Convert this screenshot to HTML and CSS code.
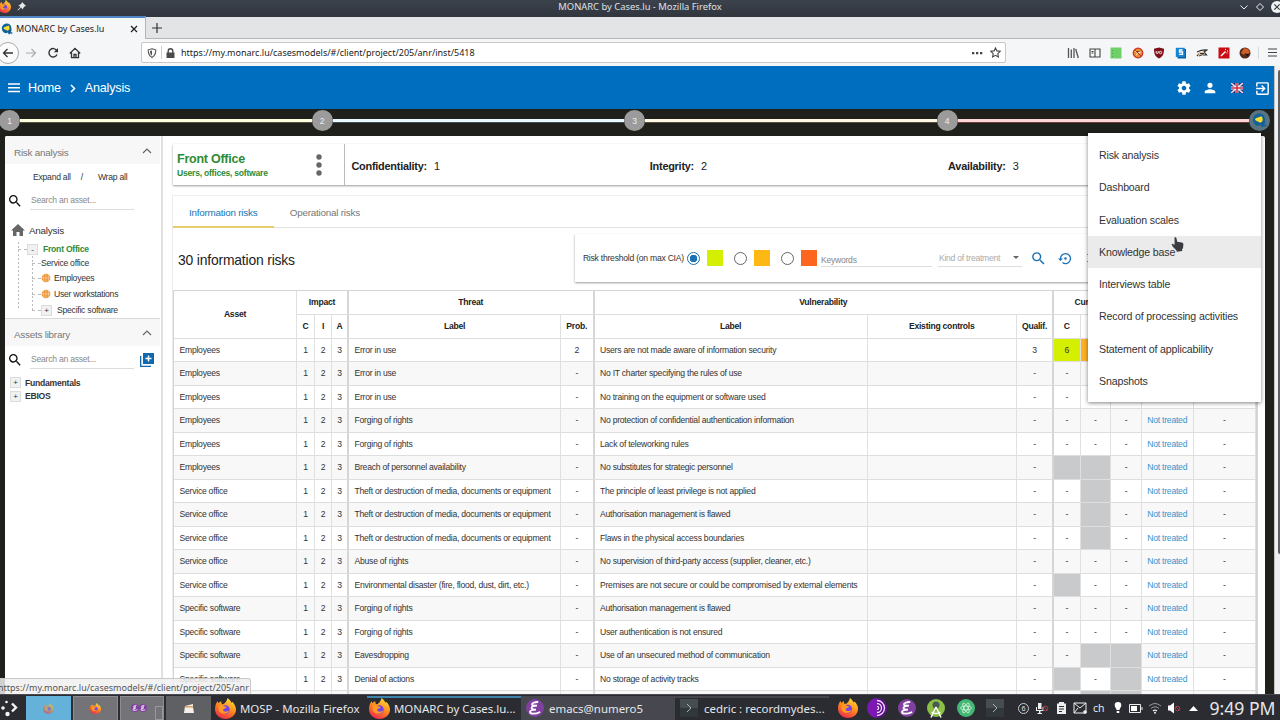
FILE: index.html
```html
<!DOCTYPE html>
<html lang="en">

<head>
    <meta charset="utf-8">
    <meta name="viewport" content="width=device-width, initial-scale=1.0">
    <title>MONARC by Cases.lu</title>
    <link rel="stylesheet" href="styles.css">
</head>

<body>

    <svg class="defs" width="0" height="0">
        <defs>
            <linearGradient id="flame" x1="0.8" y1="0" x2="0.3" y2="1">
                <stop offset="0" stop-color="#ffe23c" />
                <stop offset="0.5" stop-color="#ff8a1c" />
                <stop offset="1" stop-color="#f0294e" />
            </linearGradient>
        </defs>
        <symbol id="firefox" viewBox="0 0 20 20">
            <path fill="url(#flame)" d="M12 0c2 1.500 3 3 3.600 4.600l.9-1C19 6 20 8.700 20 11c0 5-4.500 9-10 9S0 16 0 10.500C0 7 1.300 4.500 2.600 2.800c0 1 .3 1.700.7 2.200C4 4 5 3.500 6 3.200c-.2 1 .2 2 .8 2.800C8.500 6 11 4 12 0z" />
            <circle cx="9.800" cy="11" r="4.200" fill="#7542e5" />
            <path fill="#ff9a22" d="M3.500 7.500c2-1.500 4-1 5.500.5 1.500 0 2 .5 2 1-1 1-3 1-3.500 2.500 1 2 4 2 6 .5-1 4-9 4.500-10-1z" />
        </symbol>
        <symbol id="emacs" viewBox="0 0 18 18">
            <circle cx="9" cy="9" r="9" fill="#81409f" />
            <path fill="none" stroke="#fff" stroke-width="1.800" stroke-linecap="round" d="M11.500 3C9 3 5.500 4.200 6 5.600c.4 1 3 1 5 1-3 .2-5.500 1-5.500 2.400 0 1.300 2 1.600 4.500 1.600-3 .2-6 1-6 2.400 0 2.200 6 2.200 9.500.2" />
        </symbol>
        <symbol id="terminal" viewBox="0 0 18 18">
            <path fill="#454d50" d="M0 0h18v18H0z" />
            <path fill="#30383b" d="M0 9h18v9H0z" />
            <path fill="none" stroke="#a5b5ae" stroke-width="1" d="M7 5l4 4-4 4" />
        </symbol>
        <symbol id="monarc" viewBox="0 0 14 14">
            <path fill="#14609a" d="M7 .5C3.500.5 1 3 1 6.500S3.500 12 6.500 12l1.500-1 1 2h1.500l.5-1 2 .8.5-1.300-2-1 .8-1.500C12.500 4 11 .5 7 .5z" />
            <path fill="#f6de2c" d="M8.800 3c1.300 1.200 1.500 3.500.7 5l-1.800 1L3.500 7c-.8-.5-.7-1.500 0-2z" />
        </symbol>
        <symbol id="search" viewBox="0 0 24 24">
            <path fill="currentColor" d="M15.500 14h-.79l-.28-.27A6.471 6.471 0 0 0 16 9.500 6.500 6.500 0 1 0 9.500 16c1.610 0 3.090-.59 4.230-1.570l.27.28v.79l5 4.990L20.490 19l-4.990-5zm-6 0C7.010 14 5 11.990 5 9.500S7.010 5 9.500 5 14 7.010 14 9.500 11.990 14 9.500 14z" />
        </symbol>
        <symbol id="chevron-up" viewBox="0 0 10 6">
            <path fill="none" stroke="#666" stroke-width="1.200" d="M1 5l4-4 4 4" />
        </symbol>
        <symbol id="globe" viewBox="0 0 10 10">
            <circle cx="5" cy="5" r="4.300" fill="#ee8f2c" />
            <path fill="none" stroke="#fbe0bd" stroke-width=".6" d="M1 5h8M5 1v8M3 1.500q-1.500 3.500 0 7M7 1.500q1.500 3.500 0 7" />
        </symbol>
        <symbol id="muted" viewBox="0 0 8 8">
            <circle cx="4" cy="4" r="2.700" fill="none" stroke="#b5434b" stroke-width="1" />
            <path stroke="#b5434b" d="M2 2l4 4" />
        </symbol>
    </svg>

    <header class="titlebar">
        <svg class="title-fox" width="13" height="13"><use href="#firefox" /></svg>
        <svg class="title-pin" width="9" height="9" viewBox="0 0 9 9"><path fill="#e8eaec" d="M5 0l4 4-1.200.3-1.600 1.600-.2 1.700-2-2L1 8.500.5 8l2.900-3-2-2 1.700-.2 1.600-1.600z" /></svg>
        <span class="title-text">MONARC by Cases.lu - Mozilla Firefox</span>
        <div class="title-buttons">
            <svg width="10" height="10" viewBox="0 0 10 10"><path fill="none" stroke="#eee" d="M1.500 3.500L5 7l3.500-3.500" /></svg>
            <svg width="10" height="10" viewBox="0 0 10 10"><path fill="none" stroke="#eee" d="M5 1.500L8.500 5 5 8.500 1.500 5z" /></svg>
            <svg width="12" height="12" viewBox="0 0 12 12"><circle cx="6" cy="6" r="6" fill="#f2f2f2" /><path stroke="#333a42" stroke-width="1.200" d="M3.300 3.300l5.400 5.400M8.700 3.300L3.300 8.700" /></svg>
        </div>
    </header>

    <div class="tabstrip">
        <div class="tab">
            <svg width="12" height="12"><use href="#monarc" /></svg>
            <span>MONARC by Cases.lu</span>
            <svg width="8" height="8" viewBox="0 0 8 8"><path stroke="#222" stroke-width="1.300" d="M1 1l6 6M7 1L1 7" /></svg>
        </div>
        <svg class="new-tab" width="10" height="10" viewBox="0 0 10 10"><path stroke="#333" stroke-width="1.200" d="M5 0v10M0 5h10" /></svg>
    </div>

    <div class="toolbar">
        <div class="nav-buttons">
            <span class="back"><svg width="12" height="10" viewBox="0 0 12 10"><path fill="none" stroke="#333" stroke-width="1.300" d="M11 5H1.500M5.500 1l-4 4 4 4" /></svg></span>
            <svg width="12" height="10" viewBox="0 0 12 10"><path fill="none" stroke="#aaa" stroke-width="1.100" d="M1 5h9.500M6.500 1l4 4-4 4" /></svg>
            <svg width="12" height="12" viewBox="0 0 12 12"><path fill="none" stroke="#333" stroke-width="1.400" d="M9.700 3.500A4.200 4.200 0 1 0 10 7.500" /><path fill="#333" d="M11 1v4.200H6.800z" /></svg>
            <svg width="12" height="12" viewBox="0 0 12 12"><path fill="none" stroke="#333" stroke-width="1.300" d="M.8 6.500L6 1.300l5.200 5.200M2.500 5.500v5.200h7V5.500M5 10.500v-3h2v3" /></svg>
        </div>
        <div class="urlbar">
            <svg width="10" height="10" viewBox="0 0 10 10"><path fill="none" stroke="#555" stroke-width="1.100" d="M5 .8l3.800 1C8.800 5.500 8 8 5 9.400 2 8 1.200 5.500 1.200 1.800z" /><path fill="#555" d="M5 2.500v5C3.500 6.500 3 5 3 3z" /></svg>
            <i class="url-sep"></i>
            <svg width="9" height="10" viewBox="0 0 9 10"><path fill="#4a4a4a" d="M.5 4.500h8V10h-8z" /><path fill="none" stroke="#4a4a4a" stroke-width="1.400" d="M2.200 5V3a2.300 2.300 0 0 1 4.600 0v2" /></svg>
            <span class="url">https://my.monarc.lu/casesmodels/#/client/project/205/anr/inst/5418</span>
            <svg class="dots" width="12" height="4" viewBox="0 0 12 4"><path fill="#444" d="M1 1h2.300v2.200H1zM5 1h2.300v2.200H5zM9 1h2.300v2.200H9z" /></svg>
            <svg width="11" height="11" viewBox="0 0 11 11"><path fill="none" stroke="#444" stroke-width="1.100" d="M5.500.9l1.400 3 3.300.4-2.400 2.300.6 3.300-2.900-1.600-2.900 1.600.6-3.300L.8 4.300l3.300-.4z" /></svg>
        </div>
        <div class="extensions">
            <svg width="12" height="12" viewBox="0 0 12 12"><path fill="none" stroke="#555" stroke-width="1.300" d="M1.500 1v10M4.300 2.500V11M7 1v10M8.700 2l2.600 9" /></svg>
            <svg width="12" height="12" viewBox="0 0 12 12"><path fill="none" stroke="#444" stroke-width="1.100" d="M1 2h10v8H1zM6 2v8" /><path stroke="#444" d="M2.500 4.500h2M2.500 6h2" /></svg>
            <svg width="12" height="12" viewBox="0 0 12 12"><path fill="#6fd06a" d="M.5.500h11v11H.5z" /><path fill="#48aa48" d="M2 3h1v1H2zM2 6h1v1H2zM2 9h1v1H2z" /></svg>
            <svg width="12" height="12" viewBox="0 0 12 12"><circle cx="6" cy="6" r="4.800" fill="#e98a35" stroke="#c53420" stroke-width="1.200" /><path stroke="#fff0d0" d="M3 4l3 2 3-1M4 8l4-3" /><path stroke="#c53420" d="M2.500 2.500l7 7" /></svg>
            <svg width="12" height="12" viewBox="0 0 12 12"><path fill="#801018" d="M6 .5l5 1.300C11 7 10 9.500 6 11.600 2 9.500 1 7 1 1.800z" /><path fill="none" stroke="#fff" stroke-width=".9" d="M3.200 4v2q1 1.300 2 0V4" /><circle cx="7.500" cy="5.500" r="1.200" fill="none" stroke="#fff" stroke-width=".9" /></svg>
            <svg width="12" height="12" viewBox="0 0 12 12"><path fill="#0c5d9d" d="M2.500 2H11v9.500H2.500z" /><path fill="#1684d5" d="M.8.800h9v9.200h-9z" /><path fill="none" stroke="#fff" stroke-width="1.300" d="M7.500 3h-3v2h3v2.300h-3.400" /></svg>
            <svg width="12" height="12" viewBox="0 0 12 12"><path fill="none" stroke="#333" stroke-width="1.200" d="M1 5q5-2.500 10-2L8 5l2.500 3H7M1 9l3-3" /><path fill="#e8c690" d="M3 5.500l5-1L6 8 2 9z" /><path stroke="#333" d="M4 6.500h4M3 9l4-1.500" /></svg>
            <svg width="12" height="12" viewBox="0 0 12 12"><path fill="#c90d12" d="M.5.500h11v11H.5z" /><path stroke="#fff" stroke-width="1.500" d="M3 9l4.500-4.500" /><path fill="#fff" d="M7 2h1v1H7zM9 3.500h1v1H9zM8.500 5.500h1v1h-1z" /></svg>
            <svg width="12" height="12" viewBox="0 0 12 12"><circle cx="6" cy="6" r="5.500" fill="#54281a" /><path fill="#cf5f24" d="M5 1l4 1 2 3-2 2-3-1-1 2-3-2z" /><path fill="#1c1413" d="M7 7h3L8.500 9.500z" /></svg>
        </div>
        <svg class="burger" width="9" height="9" viewBox="0 0 9 9"><path stroke="#444" stroke-width="1.200" d="M0 1h9M0 4.500h9M0 8h9" /></svg>
    </div>

    <div class="viewport">
        <div class="page">
            <header class="appbar">
                <svg width="14" height="10" viewBox="0 0 14 10"><path stroke="#fff" stroke-width="1.500" d="M1 1h12M1 4.700h12M1 8.400h12" /></svg>
                <a class="crumb">Home</a>
                <svg class="crumb-sep" width="6" height="9" viewBox="0 0 6 9"><path fill="none" stroke="#fff" stroke-width="1.500" d="M1 1l3.500 3.500L1 8" /></svg>
                <a class="crumb">Analysis</a>
                <div class="app-actions">
                    <svg width="16" height="16" viewBox="0 0 24 24"><path fill="#fff" d="M19.430 12.980c.04-.32.07-.64.07-.98s-.03-.66-.07-.98l2.110-1.650c.19-.15.24-.42.12-.64l-2-3.460c-.12-.22-.39-.3-.61-.22l-2.490 1c-.52-.4-1.080-.73-1.690-.98l-.38-2.650A.488.488 0 0 0 14 2h-4c-.25 0-.46.18-.49.42l-.38 2.650c-.61.25-1.170.59-1.690.98l-2.490-1c-.23-.09-.49 0-.61.22l-2 3.460c-.13.22-.07.49.12.64l2.110 1.650c-.04.32-.07.65-.07.98s.03.66.07.98l-2.110 1.650c-.19.15-.24.42-.12.64l2 3.460c.12.22.39.3.61.22l2.490-1c.52.4 1.080.73 1.690.98l.38 2.650c.03.24.24.42.49.42h4c.25 0 .46-.18.49-.42l.38-2.650c.61-.25 1.170-.59 1.690-.98l2.490 1c.23.09.49 0 .61-.22l2-3.460c.12-.22.07-.49-.12-.64l-2.110-1.650zM12 15.500c-1.930 0-3.500-1.570-3.500-3.500s1.570-3.500 3.500-3.500 3.500 1.570 3.500 3.500-1.570 3.500-3.500 3.500z" /></svg>
                    <svg width="16" height="16" viewBox="0 0 24 24"><path fill="#fff" d="M12 12c2.210 0 4-1.790 4-4s-1.790-4-4-4-4 1.790-4 4 1.790 4 4 4zm0 2c-2.670 0-8 1.340-8 4v2h16v-2c0-2.660-5.330-4-8-4z" /></svg>
                    <svg width="12" height="10" viewBox="0 0 12 10"><path fill="#26337b" d="M0 0h12v10H0z" /><path stroke="#f5dfe4" stroke-width="1.500" d="M0 0l12 10M12 0L0 10" /><path stroke="#fff" stroke-width="2.800" d="M6 0v10M0 5h12" /><path stroke="#d22f46" stroke-width="1.600" d="M6 0v10M0 5h12" /></svg>
                    <svg width="17" height="17" viewBox="0 0 24 24"><path fill="#fff" d="M10.090 15.590L11.500 17l5-5-5-5-1.410 1.410L12.670 11H3v2h9.670l-2.580 2.590zM19 3H5a2 2 0 0 0-2 2v4h2V5h14v14H5v-4H3v4a2 2 0 0 0 2 2h14c1.100 0 2-.9 2-2V5c0-1.100-.9-2-2-2z" /></svg>
                </div>
            </header>

            <div class="steps">
                <span class="step">1</span>
                <i class="line line-1"></i>
                <span class="step">2</span>
                <i class="line line-2"></i>
                <span class="step">3</span>
                <i class="line line-3"></i>
                <span class="step">4</span>
                <i class="line line-4"></i>
                <span class="step step-logo"><svg width="15" height="15"><use href="#monarc" /></svg></span>
            </div>

            <div class="workspace">
                <aside class="sidebar">
                    <h3 class="side-title">Risk analysis <svg width="10" height="6"><use href="#chevron-up" /></svg></h3>
                    <div class="expand"><span>Expand all</span><span>/</span><span>Wrap all</span></div>
                    <div class="side-search">
                        <svg width="16" height="16"><use href="#search" /></svg>
                        <span class="side-input">Search an asset...</span>
                    </div>
                    <div class="tree-root">
                        <svg width="14" height="12" viewBox="0 0 14 12"><path fill="#666" d="M7 0l7 6.500h-2V12H8.500V8h-3v4H2V6.500H0z" /></svg>
                        <span>Analysis</span>
                    </div>
                    <div class="tree">
                        <div class="node node-current"><i></i><b class="toggle">-</b>Front Office</div>
                        <div class="branch">
                            <div class="node"><i></i>Service office</div>
                            <div class="node node-tall"><i></i><svg width="10" height="10"><use href="#globe" /></svg>Employees</div>
                            <div class="node node-tall"><i></i><svg width="10" height="10"><use href="#globe" /></svg>User workstations</div>
                            <div class="node node-last"><i></i><b class="toggle">+</b>Specific software</div>
                        </div>
                    </div>
                    <h3 class="side-title side-library">Assets library <svg width="10" height="6"><use href="#chevron-up" /></svg></h3>
                    <div class="side-search library-search">
                        <svg width="16" height="16"><use href="#search" /></svg>
                        <span class="side-input">Search an asset...</span>
                        <svg class="add" width="14" height="14" viewBox="0 0 14 14"><path fill="#1068ad" d="M3 0h11v11H3zM0 3h1.300v9.700H11V14H0z" /><path stroke="#fff" stroke-width="1.500" d="M8.500 2.500v6M5.500 5.500h6" /></svg>
                    </div>
                    <div class="lib-item"><b class="toggle">+</b>Fundamentals</div>
                    <div class="lib-item"><b class="toggle">+</b>EBIOS</div>
                </aside>

                <main class="content">
                    <section class="instance">
                        <div class="instance-name">
                            <div>
                                <h2>Front Office</h2>
                                <p>Users, offices, software</p>
                            </div>
                            <svg width="6" height="22" viewBox="0 0 6 22"><g fill="#666"><circle cx="3" cy="3" r="2.700" /><circle cx="3" cy="11" r="2.700" /><circle cx="3" cy="19" r="2.700" /></g></svg>
                        </div>
                        <div class="criterion"><b>Confidentiality:</b> 1</div>
                        <div class="criterion"><b>Integrity:</b> 2</div>
                        <div class="criterion"><b>Availability:</b> 3</div>
                    </section>

                    <section class="risks">
                        <nav class="risk-tabs">
                            <a class="risk-tab active">Information risks</a>
                            <a class="risk-tab">Operational risks</a>
                        </nav>
                        <div class="risk-head">
                            <h1>30 information risks</h1>
                            <div class="filters">
                                <span class="threshold">Risk threshold (on max CIA)</span>
                                <i class="radio checked"></i><i class="swatch low"></i>
                                <i class="radio"></i><i class="swatch medium"></i>
                                <i class="radio"></i><i class="swatch high"></i>
                                <span class="keywords">Keywords</span>
                                <span class="treatment">Kind of treatment <i></i></span>
                                <svg class="find" width="17" height="17"><use href="#search" /></svg>
                                <svg class="restore" width="15" height="15" viewBox="0 0 24 24"><path fill="#1a73b5" d="M14 12c0-1.100-.9-2-2-2s-2 .9-2 2 .9 2 2 2 2-.9 2-2zm-2-9a9 9 0 0 0-9 9H0l4 4 4-4H5c0-3.870 3.130-7 7-7s7 3.130 7 7a6.995 6.995 0 0 1-11.060 5.700l-1.420 1.440A9 9 0 1 0 12 3z" /></svg>
                                <i class="red-mark"></i>
                            </div>
                        </div>

                        <div class="table">
                            <div class="thead">
                                <span class="th-asset">Asset</span>
                                <span class="th-impact thick">Impact</span>
                                <span class="th-threat thick">Threat</span>
                                <span class="th-vuln thick">Vulnerability</span>
                                <span class="th-risk">Current risk</span>
                                <span class="th-rest"></span>
                                <span class="th-rest"></span>
                                <span>C</span><span>I</span><span class="thick">A</span>
                                <span>Label</span><span class="thick">Prob.</span>
                                <span>Label</span><span>Existing controls</span><span class="thick">Qualif.</span>
                                <span>C</span><span>I</span><span>A</span>
                            </div>
                            <div class="tbody" id="rows"></div>
                        </div>
                    </section>
                </main>
            </div>

            <div class="menu">
                <a>Risk analysis</a>
                <a>Dashboard</a>
                <a>Evaluation scales</a>
                <a class="hover">Knowledge base</a>
                <a>Interviews table</a>
                <a>Record of processing activities</a>
                <a>Statement of applicability</a>
                <a>Snapshots</a>
            </div>
            <svg class="pointer" width="13" height="15" viewBox="0 0 13 15"><path fill="#3c3c40" d="M3.500.5c1-.6 1.800 0 2 1l.7 3.200 4.500.7c1.500.3 1.800 1 1.700 2.200l-.4 3.600-1 1 .3 1.800-5.500.7-.5-1.500L2 10 .6 7.200c.5-.8 1.500-.6 2.500.8L3.600 7z" /></svg>
        </div>
        <div class="scrollbar"><i></i></div>
        <div class="status">https://my.monarc.lu/casesmodels/#/client/project/205/anr</div>
    </div>

    <footer class="taskbar">
        <svg class="launcher" width="18" height="18" viewBox="0 0 18 18"><g fill="#f4f4f4"><circle cx="6.500" cy="3" r="1.300" /><circle cx="3" cy="9" r="1.800" /><circle cx="7.500" cy="15" r="2.200" /></g><path fill="none" stroke="#f4f4f4" stroke-width="2.400" d="M12 4.500L16 8.500l-4 4" /></svg>
        <div class="pager">
            <span class="desk desk-on"><svg width="11" height="11"><use href="#firefox" /></svg></span>
            <span class="desk"><svg width="11" height="11"><use href="#firefox" /></svg></span>
            <span class="desk desk-emacs"><svg width="8" height="8"><use href="#emacs" /></svg><svg width="8" height="8"><use href="#emacs" /></svg><i class="mini"></i></span>
            <span class="desk desk-files"><svg width="10" height="9" viewBox="0 0 10 9"><path fill="#f4efe7" d="M1 2l8-2v3l1 6H0z" /><path fill="#d6a163" d="M1 2h8v1.500H1z" /></svg></span>
        </div>
        <div class="task task-first"><svg width="21" height="21"><use href="#firefox" /></svg>MOSP - Mozilla Firefox</div>
        <div class="task task-active"><svg width="21" height="21"><use href="#firefox" /></svg>MONARC by Cases.lu...</div>
        <div class="task task-emacs"><svg width="18" height="18"><use href="#emacs" /></svg>emacs@numero5</div>
        <div class="task task-term"><svg width="18" height="18"><use href="#terminal" /></svg>cedric : recordmydes...</div>
        <div class="tray-apps">
            <svg width="20" height="20"><use href="#firefox" /></svg>
            <svg width="20" height="20" viewBox="0 0 20 20"><circle cx="10" cy="10" r="10" fill="#7d18b5" /><path fill="#5a0f85" d="M10 0a10 10 0 0 1 0 20z" /><path fill="none" stroke="#f2ddff" stroke-width="1.300" d="M10 2.500a7.500 7.500 0 0 1 0 15M10 5.500a4.500 4.500 0 0 1 0 9M10 8.300a1.700 1.700 0 0 1 0 3.400" /></svg>
            <svg width="18" height="18"><use href="#emacs" /></svg>
            <svg width="18" height="19" viewBox="0 0 18 19"><circle cx="9" cy="9" r="9" fill="#8bbf45" /><circle cx="9" cy="6" r="3.500" fill="#4b5a50" /><path fill="none" stroke="#fff" stroke-width="1.500" d="M9 8L4 18.500M9 8l5 10.500M4.500 13q4.500 3 9 0" /></svg>
            <svg width="18" height="18" viewBox="0 0 18 18"><circle cx="9" cy="9" r="9" fill="#42b874" /><g fill="none" stroke="#d6f2df" stroke-width=".8"><ellipse cx="9" cy="9" rx="5.500" ry="2" /><ellipse cx="9" cy="9" rx="5.500" ry="2" transform="rotate(60 9 9)" /><ellipse cx="9" cy="9" rx="5.500" ry="2" transform="rotate(120 9 9)" /></g></svg>
            <svg width="18" height="18"><use href="#terminal" /></svg>
        </div>
        <div class="tray">
            <span class="six">6</span>
            <svg width="14" height="13" viewBox="0 0 14 13"><path fill="#eee" d="M3 1h3.500v6H3zM1 5h1v3h5.500V5h1v4H5.500v2H7v1H2.500v-1H4V9H1z" /><use href="#muted" x="7" y="3" width="7" height="7" /></svg>
            <svg width="11" height="12" viewBox="0 0 11 12"><path fill="#eee" d="M1 1.500h2V0h5v1.500h2V12H1z" /><path stroke="#2c2e33" d="M3 4.500h5M3 7h5M3 9.500h3" /></svg>
            <svg width="14" height="12" viewBox="0 0 14 12"><path fill="none" stroke="#eee" d="M1 1h12v10H1zM1 1l6 5 6-5M1 11l4-5" /><circle cx="12" cy="10" r="1.800" fill="#eee" /></svg>
            <span>ch</span>
            <svg width="8" height="12" viewBox="0 0 8 12"><path fill="#fff" d="M4 0a3.300 3.300 0 0 1 3.300 3.300C7.300 5.500 5.500 6 5.500 8h-3c0-2-1.800-2.500-1.800-4.700A3.300 3.300 0 0 1 4 0zM2.700 9h2.600v2H2.700z" /></svg>
            <svg width="14" height="9" viewBox="0 0 14 9"><path fill="none" stroke="#eee" d="M.5.500h11v8H.5zM13 3v3" /><path fill="#fff" d="M2 2h6v5H2z" /></svg>
            <svg width="14" height="12" viewBox="0 0 14 12"><path fill="none" stroke="#999" d="M1 4q6-5 12 0M3 6.500q4-3.500 8 0" /><path fill="none" stroke="#eee" stroke-width="1.200" d="M5 9q2-1.800 4 0" /><circle cx="7" cy="10.800" r="1" fill="#eee" /></svg>
            <svg width="14" height="12" viewBox="0 0 14 12"><path fill="#fff" d="M1 3.500h2L7 .5v11l-4-3H1z" /><use href="#muted" x="7" y="3" width="7" height="7" /></svg>
            <svg width="9" height="5" viewBox="0 0 9 5"><path fill="#fff" d="M0 5l4.500-5L9 5z" /></svg>
        </div>
        <span class="clock">9:49 PM</span>
    </footer>

    <script>
        // asset, threat, prob, vulnerability, qualif, C I A ("x" = not applicable)
        const risks = [
            ["Employees", "Error in use", "2", "Users are not made aware of information security", "3", "6oo"],
            ["Employees", "Error in use", "-", "No IT charter specifying the rules of use", "-", "---"],
            ["Employees", "Error in use", "-", "No training on the equipment or software used", "-", "---"],
            ["Employees", "Forging of rights", "-", "No protection of confidential authentication information", "-", "---"],
            ["Employees", "Forging of rights", "-", "Lack of teleworking rules", "-", "---"],
            ["Employees", "Breach of personnel availability", "-", "No substitutes for strategic personnel", "-", "xx-"],
            ["Service office", "Theft or destruction of media, documents or equipment", "-", "The principle of least privilege is not applied", "-", "-x-"],
            ["Service office", "Theft or destruction of media, documents or equipment", "-", "Authorisation management is flawed", "-", "-x-"],
            ["Service office", "Theft or destruction of media, documents or equipment", "-", "Flaws in the physical access boundaries", "-", "-x-"],
            ["Service office", "Abuse of rights", "-", "No supervision of third-party access (supplier, cleaner, etc.)", "-", "---"],
            ["Service office", "Environmental disaster (fire, flood, dust, dirt, etc.)", "-", "Premises are not secure or could be compromised by external elements", "-", "x--"],
            ["Specific software", "Forging of rights", "-", "Authorisation management is flawed", "-", "---"],
            ["Specific software", "Forging of rights", "-", "User authentication is not ensured", "-", "---"],
            ["Specific software", "Eavesdropping", "-", "Use of an unsecured method of communication", "-", "-xx"],
            ["Specific software", "Denial of actions", "-", "No storage of activity tracks", "-", "x-x"],
            ["", "", "", "", "", " xx"]
        ];
        const colors = { "6": "green", "o": "orange", "x": "grey" };

        function cell(text, name) {
            return `<span class="${name || ""}">${text}</span>`;
        }

        document.querySelector("#rows").innerHTML = risks.map(r => {
            const filled = r[0] != "";
            const impact = filled ? ["1", "2", "3"] : ["", "", ""];
            const cia = r[5].split("").map(c => cell(c == "x" || c == "o" ? "" : c, colors[c])).join("");
            return `<div class="row">` +
                cell(r[0], "text") +
                cell(impact[0]) + cell(impact[1]) + cell(impact[2], "thick") +
                cell(r[1], "text") + cell(r[2], "thick") +
                cell(r[3], "text") + cell("") + cell(r[4], "thick") +
                cia +
                cell(filled ? "Not treated" : "", "link") + cell(filled ? "-" : "") +
                `</div>`;
        }).join("");
    </script>
</body>

</html>
```
FILE: styles.css
```css
* {
    box-sizing: border-box;
}

body {
    margin: 0;
    width: 1280px;
    height: 720px;
    overflow: hidden;
    display: flex;
    flex-direction: column;
    font-family: "Noto Sans", sans-serif;
    background: #fff;
}

svg {
    display: block;
    flex: none;
}

h1, h2, h3, p {
    margin: 0;
    font-weight: normal;
}

.defs {
    position: absolute;
}

/* window chrome */

.titlebar {
    height: 17px;
    flex: none;
    display: flex;
    align-items: center;
    background: linear-gradient(#3c424c, #30353e);
    color: #dfe2e6;
    font-size: 9.4px;
    padding-bottom: 4px;
}

.title-fox {
    margin-left: -2px;
}

.title-pin {
    margin-left: 6px;
}

.title-text {
    flex: 1;
    text-align: center;
    padding-left: 15px;
}

.title-buttons {
    display: flex;
    align-items: center;
    gap: 6px;
    margin-right: -3px;
}

.tabstrip {
    height: 22px;
    flex: none;
    display: flex;
    align-items: center;
    background: #e3e4e6;
    border-bottom: 1px solid #b5b5b8;
}

.tab {
    width: 146px;
    height: 23px;
    display: flex;
    align-items: center;
    background: #f5f6f7;
    border-top: 2px solid #4e87c4;
    border-right: 1px solid #b5b5b8;
    font-size: 9px;
    color: #222;
    padding-left: 1px;
}

.tab span {
    flex: 1;
    padding-left: 3px;
}

.tab svg:last-child {
    margin-right: 7px;
}

.new-tab {
    margin-left: 6px;
}

.toolbar {
    height: 27px;
    flex: none;
    display: flex;
    align-items: center;
    background: #f5f6f7;
}

.nav-buttons {
    width: 141px;
    display: flex;
    align-items: center;
    gap: 10px;
}

.back {
    width: 22px;
    height: 22px;
    margin-left: -3px;
    margin-right: -4px;
    display: flex;
    align-items: center;
    justify-content: center;
    border: 1px solid #aaa;
    border-radius: 50%;
    background: #fcfcfc;
}

.urlbar {
    width: 865px;
    height: 21px;
    display: flex;
    align-items: center;
    background: #fff;
    border: 1px solid #c8c8ca;
    border-radius: 2px;
    padding: 0 4px 0 5px;
    font-size: 9px;
    color: #222;
}

.url-sep {
    width: 1px;
    height: 13px;
    margin: 0 4px 0 4px;
    background: #ccc;
}

.url {
    flex: 1;
    padding-left: 6px;
}

.dots {
    margin-right: 7px;
}

.extensions {
    display: flex;
    margin-left: 61px;
    padding-right: 7px;
    border-right: 1px solid #d8d8da;
}

.extensions svg {
    margin-right: 9.500px;
}

.extensions svg:last-child {
    margin-right: 0;
}

.burger {
    margin-left: 9px;
}

/* app */

.viewport {
    position: relative;
    height: 628px;
    flex: none;
    display: flex;
    overflow: hidden;
}

.page {
    position: relative;
    width: 1274px;
    flex: none;
    background: #1f201c;
    font-family: "Liberation Sans", Arial, sans-serif;
}

.scrollbar {
    width: 6px;
    background: #efeff2;
    border-left: 1px solid #c4c4c6;
    padding-top: 4px;
}

.scrollbar i {
    display: block;
    height: 484px;
    margin-left: 3px;
    background: #5d5e61;
    border-radius: 2px 0 0 2px;
}

.appbar {
    height: 43px;
    display: flex;
    align-items: center;
    background: #006ebe;
    color: #fff;
    font-size: 12.6px;
    letter-spacing: -.2px;
    padding-left: 7px;
    padding-top: 1px;
}

.crumb {
    margin-left: 7px;
}

.crumb-sep {
    margin: 0 2px 0 9px;
}

.app-actions {
    margin-left: auto;
    margin-right: -2px;
    display: grid;
    grid-template-columns: repeat(4, 26.3px);
    align-items: center;
    justify-items: center;
}

.steps {
    height: 27px;
    display: flex;
    align-items: center;
    padding-bottom: 4px;
    margin-left: -1px;
    width: 1271px;
}

.step {
    width: 21px;
    height: 21px;
    flex: none;
    border-radius: 50%;
    display: flex;
    align-items: center;
    justify-content: center;
    background: #9b9b9b;
    color: #eee;
    font-size: 8.5px;
}

.step-logo {
    background: #587480;
}

.line {
    flex: 1;
    height: 3px;
}

.line-1 {
    background: #fffde0;
    box-shadow: 0 1px 0 #55543c;
}

.line-2 {
    background: #eaf8ff;
    box-shadow: 0 1px 0 #3c505a;
}

.line-3 {
    background: #fff8e4;
    box-shadow: 0 1px 0 #55503c;
}

.line-4 {
    background: #ffd6d8;
    box-shadow: 0 1px 0 #6b3f3d;
}

.workspace {
    height: 558px;
    width: 1260px;
    margin-left: 5px;
    display: flex;
    background: #fff;
    border-radius: 2px 2px 0 0;
    overflow: hidden;
}

/* sidebar */

.sidebar {
    width: 158px;
    flex: none;
    border-right: 2px solid #e0e0e1;
    font-size: 8.6px;
    letter-spacing: -.24px;
    color: #333;
}

.side-title {
    height: 28px;
    width: 155px;
    display: flex;
    align-items: center;
    justify-content: space-between;
    background: #f7f7f7;
    color: #777;
    font-size: 9.9px;
    padding: 4px 8px 0 9px;
}

.side-title svg {
    margin-bottom: 3px;
}

.expand {
    display: flex;
    padding: 8px 0 0 28px;
    line-height: 11px;
}

.expand span + span {
    margin-left: 10px;
}

.expand span:last-child {
    margin-left: 15px;
}

.side-search {
    display: flex;
    align-items: center;
    padding: 9px 0 0 2px;
    color: #111;
}

.side-input {
    width: 104px;
    height: 18px;
    line-height: 17px;
    margin-left: 7px;
    padding-left: 1px;
    color: #8a8a8a;
    border-bottom: 1px solid #ddd;
}

.tree-root {
    display: flex;
    align-items: center;
    height: 14px;
    margin-top: 13px;
    padding-left: 6px;
    font-size: 9.9px;
}

.tree-root span {
    margin-left: 4px;
}

.tree {
    height: 76px;
    margin: 5px 0 0 13px;
    background: repeating-linear-gradient(#bbb 0 2px, transparent 2px 4px) 0 0 / 1px 68px no-repeat;
}

.branch {
    margin-left: 14px;
    background: repeating-linear-gradient(#bbb 0 2px, transparent 2px 4px) 0 0 / 1px 55px no-repeat;
}

.node {
    display: flex;
    align-items: center;
    height: 14px;
    gap: 3px;
}

.node i {
    width: 9px;
    margin-right: -3px;
    border-top: 1px dashed #bbb;
}

.node-tall,
.node-last {
    height: 16px;
}

.node-current {
    color: #2e8b35;
    font-weight: bold;
}

.node .toggle {
    margin-right: 2px;
}

.toggle {
    width: 11px;
    height: 11px;
    flex: none;
    border: 1px solid #dcdcdc;
    background: #f1f1f1;
    color: #333;
    font-size: 8px;
    font-weight: normal;
    line-height: 10px;
    text-align: center;
}

.side-library {
    border-top: 1px solid #d8d8d8;
}

.library-search {
    padding-top: 5px;
    margin-bottom: 7px;
}

.add {
    margin-left: 6px;
}

.lib-item {
    display: flex;
    align-items: center;
    height: 13.5px;
    padding-left: 5px;
    font-weight: bold;
    gap: 4px;
}

/* content */

.content {
    flex: none;
    width: 1092px;
    padding: 8px 0 0 10px;
    font-size: 8.6px;
    letter-spacing: -.24px;
    color: #333;
}

.instance {
    height: 41px;
    display: grid;
    grid-template-columns: 171.500px repeat(3, 298.300px);
    box-shadow: 0 1px 2px rgba(0, 0, 0, .4);
}

.instance-name {
    display: flex;
    align-items: center;
    justify-content: space-between;
    border-right: 1px solid #bbb;
    padding: 0 22px 0 4px;
    color: #2e8b35;
    font-weight: bold;
}

.instance-name h2 {
    font-size: 12.5px;
    line-height: 15px;
    font-weight: bold;
    padding-top: 2px;
}

.instance-name p {
    font-weight: bold;
    line-height: 13px;
}

.criterion {
    display: flex;
    align-items: center;
    gap: 7px;
    padding: 2px 0 0 7px;
    font-size: 10.9px;
    color: #222;
}

.risks {
    margin-top: 10px;
    border-top: 1px solid #f0f0f0;
    box-shadow: -1px 0 0 #ececec;
}

.risk-tabs {
    height: 32px;
    display: flex;
    border-bottom: 1px solid #e2e2e2;
}

.risk-tab {
    height: 32px;
    padding: 2px 16.500px 0 16px;
    line-height: 30px;
    font-size: 9.9px;
    color: #777;
}

.active {
    color: #1a73b5;
    border-bottom: 2px solid #e5cf6d;
}

.risk-head {
    height: 62px;
    display: flex;
    align-items: center;
    padding-top: 1px;
}

.risk-head h1 {
    font-size: 13.9px;
    letter-spacing: -.18px;
    color: #222;
    padding-left: 5px;
    width: 403px;
}

.filters {
    width: 682px;
    height: 48px;
    margin-top: -3px;
    display: flex;
    align-items: center;
    padding-left: 8px;
    box-shadow: 0 1px 2px rgba(0, 0, 0, .4);
}

.threshold {
    width: 104px;
    white-space: nowrap;
}

.radio {
    width: 13px;
    height: 13px;
    border: 1.500px solid #666;
    border-radius: 50%;
}

.checked {
    border-color: #1a73b5;
    background: radial-gradient(#1a73b5 0 3.500px, transparent 4px);
}

.swatch {
    width: 16px;
    height: 16px;
    margin: 0 11px 0 7px;
}

.low {
    background: #d4f000;
}

.medium {
    background: #fdb813;
}

.high {
    background: #fd661f;
    margin-right: 4px;
}

.keywords {
    width: 111px;
    height: 17px;
    line-height: 20px;
    border-bottom: 1px solid #ddd;
    color: #888;
}

.treatment {
    width: 84px;
    height: 17px;
    line-height: 16px;
    margin-left: 6px;
    padding: 0 3px 0 1px;
    display: flex;
    justify-content: space-between;
    align-items: center;
    border-bottom: 1px solid #ddd;
    color: #aaa;
    white-space: nowrap;
}

.treatment i {
    border: 3px solid transparent;
    border-top-color: #666;
    border-bottom: 0;
}

.find {
    margin-left: 8px;
    color: #1a73b5;
}

.restore {
    margin-left: 11px;
}

.red-mark {
    width: 3px;
    height: 8px;
    margin-left: 14px;
    border: 1px solid #d66;
    border-width: 1px 0;
}

/* risk table */

.table {
    width: 1085px;
    border: 1px solid #d4d4d4;
    border-width: 1px 2px 0 1px;
}

.thead,
.row {
    display: grid;
    grid-template-columns: 123px 18px 17px 17px 212px 33.500px 273px 149.500px 37px 26.500px 30.500px 31px 51.500px 1fr;
}

.thead {
    grid-template-rows: 23.500px 24px;
    font-weight: bold;
    color: #222;
}

.thead span,
.row span {
    display: flex;
    align-items: center;
    justify-content: center;
    border-right: 1px solid #e0e0e0;
    border-bottom: 1px solid #dedede;
    white-space: nowrap;
    min-width: 0;
}

.thead .thick,
.row .thick {
    border-right: 2px solid #d6d6d6;
}

.thead .th-asset,
.thead .th-rest {
    grid-row: span 2;
}

.thead .th-impact,
.thead .th-risk {
    grid-column: span 3;
}

.thead .th-threat {
    grid-column: span 2;
}

.thead .th-vuln {
    grid-column: span 3;
}

.row {
    height: 23.500px;
}

.row:nth-child(even) {
    background: #f8f8f8;
}

.row .text {
    justify-content: flex-start;
    padding-left: 5.500px;
}

.row .green {
    background: #d4f000;
}

.row .orange {
    background: #fdb125;
}

.row .grey {
    background: #c9cacc;
}

.row .link {
    color: #3a92cc;
}

/* overlays */

.menu {
    position: absolute;
    left: 1088px;
    top: 67px;
    width: 173px;
    height: 269px;
    padding-top: 6px;
    background: #fff;
    box-shadow: 0 1px 4px rgba(0, 0, 0, .5);
    color: #333;
    font-size: 10.6px;
    letter-spacing: -.15px;
}

.menu a {
    display: block;
    height: 32.300px;
    line-height: 32.800px;
    padding-left: 11px;
}

.menu .hover {
    background: #ebebeb;
}

.pointer {
    position: absolute;
    left: 1171px;
    top: 171px;
}

.status {
    position: absolute;
    left: 0;
    bottom: 0;
    width: 251px;
    height: 16px;
    background: rgba(240, 240, 241, .85);
    border: 1px solid #c9c9c9;
    border-width: 1px 1px 0 0;
    border-radius: 0 3px 0 0;
    font-size: 9px;
    line-height: 17px;
    color: #555;
    text-indent: -2px;
    white-space: nowrap;
}

/* desktop panel */

.taskbar {
    height: 26px;
    flex: none;
    display: flex;
    align-items: center;
    background: #2a2c32;
    border-top: 1px solid #484a50;
    color: #e6e6e8;
    font-size: 11.45px;
    padding-top: 1px;
}

.launcher {
    margin: 0 8px 0 0;
}

.pager {
    display: flex;
    flex: none;
    gap: 2px;
    height: 25px;
    width: 185px;
}

.desk {
    width: 45px;
    height: 25px;
    display: flex;
    align-items: center;
    justify-content: center;
    background: #747478;
    border: 1px solid #8d8d91;
}

.desk-on {
    background: #64b1d9;
    border-color: #64b1d9;
}

.desk-on svg {
    opacity: .55;
}

.desk-emacs {
    justify-content: flex-end;
}

.desk-files {
    background: #5f6064;
    border-color: #5f6064;
}

.desk .mini {
    align-self: flex-end;
    width: 8px;
    height: 14px;
    margin-left: 8px;
    border: 1px solid #98989c;
}

.task {
    width: 154px;
    height: 25px;
    flex: none;
    display: flex;
    align-items: center;
    gap: 4px;
    padding-left: 5px;
    white-space: nowrap;
}

.task-first {
    width: 156px;
    padding-left: 4px;
}

.task-active {
    border-top: 2px solid #3d83ab;
    padding: 0 0 2px 2px;
}

.task-emacs {
    background: #47484f;
    gap: 5px;
}

.task-term {
    gap: 6px;
    border-top: 2px solid #44464c;
    padding-bottom: 2px;
}

.tray-apps {
    display: grid;
    flex: none;
    grid-template-columns: repeat(6, 29.500px);
    align-items: center;
    justify-items: center;
    margin-left: 4px;
}

.tray {
    display: grid;
    flex: none;
    grid-template-columns: repeat(10, 18.850px);
    align-items: center;
    justify-items: center;
    margin-left: 4px;
    font-size: 10.5px;
}

.six {
    width: 11px;
    height: 11px;
    border: 1px solid #ccc;
    border-radius: 50%;
    font-size: 7px;
    line-height: 9px;
    text-align: center;
}

.clock {
    margin-left: 7px;
    font-size: 17.6px;
    white-space: nowrap;
}
```
